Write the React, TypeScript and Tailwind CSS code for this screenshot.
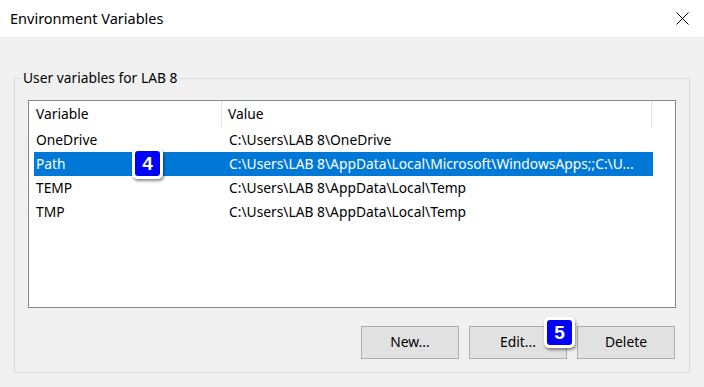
import React from "react";

const rows = [
  { name: "OneDrive", value: "C:\\Users\\LAB 8\\OneDrive", selected: false },
  { name: "Path", value: "C:\\Users\\LAB 8\\AppData\\Local\\Microsoft\\WindowsApps;;C:\\U...", selected: true },
  { name: "TEMP", value: "C:\\Users\\LAB 8\\AppData\\Local\\Temp", selected: false },
  { name: "TMP", value: "C:\\Users\\LAB 8\\AppData\\Local\\Temp", selected: false },
];

function Badge({ n }: { n: string }) {
  return (
    <div className="w-[31px] h-[31px] rounded-[5px] bg-white p-[3px] shadow-[1px_2px_3px_rgba(0,0,0,0.45)]">
      <div className="w-full h-full rounded-[3px] bg-[#0000ff] flex items-center justify-center text-white font-bold text-[19px] leading-none font-['Liberation_Sans',sans-serif]">
        {n}
      </div>
    </div>
  );
}

export default function App() {
  return (
    <div className="w-[704px] h-[387px] bg-[#f0f0f0] font-['Noto_Sans',sans-serif] text-[13.8px] text-black overflow-hidden">
      <div className="h-[37px] bg-white flex items-center justify-between pl-[10px] pr-[14px]">
        <span className="text-[14.5px] leading-none">Environment Variables</span>
        <svg width="13" height="13" viewBox="0 0 13 13" className="mr-[1px]">
          <path d="M0.5 0.5L12.5 12.5M12.5 0.5L0.5 12.5" stroke="#000" strokeWidth="1" />
        </svg>
      </div>
      <fieldset className="ml-[14px] mt-[31px] w-[676px] border border-[#dcdcdc] pl-[13px] pr-[13px] pt-[12px] pb-[13px]">
        <legend className="ml-[-7px] px-[2px] leading-[20px]">User variables for LAB 8</legend>
        <div className="h-[208px] border border-[#828790] bg-white">
          <div className="h-[27px] flex items-center">
            <div className="w-[193px] pl-[7px] h-full flex items-center border-r border-[#e5e5e5]">Variable</div>
            <div className="w-[430px] pl-[6px] h-full flex items-center border-r border-[#e5e5e5]">Value</div>
          </div>
          <div className="pl-[5px] w-[624px]">
            {rows.map((r) => (
              <div
                key={r.name}
                className={`h-[24px] flex items-center ${r.selected ? "bg-[#0078d7] text-white" : ""}`}
              >
                <div className="relative w-[195px] pl-[2px] h-full flex items-center">
                  <span>{r.name}</span>
                  {r.selected && (
                    <div className="absolute left-[98px] top-[-4px]">
                      <Badge n="4" />
                    </div>
                  )}
                </div>
                <div className="whitespace-nowrap overflow-hidden">{r.value}</div>
              </div>
            ))}
          </div>
        </div>
        <div className="mt-[18px] mr-[1px] flex justify-end gap-[10px]">
          <button className="w-[98px] h-[33px] border border-[#adadad] bg-[#e1e1e1]">New...</button>
          <div className="relative">
            <button className="w-[98px] h-[33px] border border-[#adadad] bg-[#e1e1e1]">Edit...</button>
            <div className="absolute left-[75px] top-[-9px]">
              <Badge n="5" />
            </div>
          </div>
          <button className="w-[98px] h-[33px] border border-[#adadad] bg-[#e1e1e1]">Delete</button>
        </div>
      </fieldset>
    </div>
  );
}
